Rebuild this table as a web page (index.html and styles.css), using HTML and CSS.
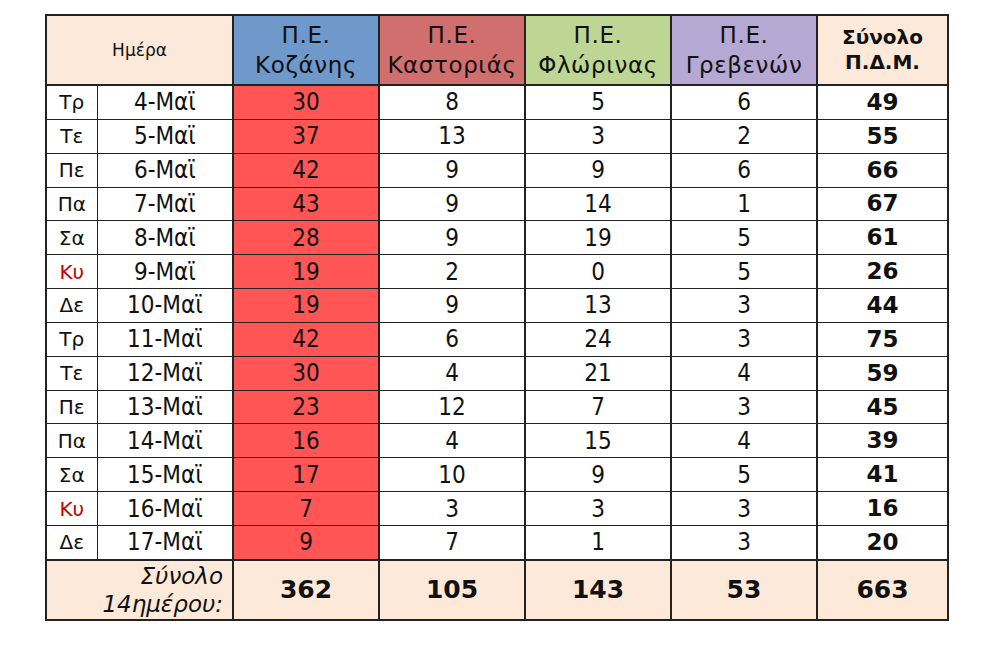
FILE: index.html
```html
<!DOCTYPE html>
<html lang="el">
<head>
<meta charset="utf-8">
<title>Κρούσματα</title>
<link rel="stylesheet" href="styles.css">
</head>
<body>
<table class="tbl">
  <colgroup>
    <col class="c-wd"><col class="c-date"><col class="c-pe"><col class="c-pe"><col class="c-pe"><col class="c-pe"><col class="c-tot">
  </colgroup>
  <thead>
    <tr class="head">
      <th colspan="2" class="h-day">Ημέρα</th>
      <th class="h-pe h-koz">Π.Ε.<br>Κοζάνης</th>
      <th class="h-pe h-kas">Π.Ε.<br>Καστοριάς</th>
      <th class="h-pe h-flo">Π.Ε.<br>Φλώρινας</th>
      <th class="h-pe h-gre">Π.Ε.<br>Γρεβενών</th>
      <th class="h-tot">Σύνολο<br>Π.Δ.Μ.</th>
    </tr>
  </thead>
  <tbody>
    <tr><td class="wd">Τρ</td><td class="dt">4-Μαϊ</td><td class="koz">30</td><td>8</td><td>5</td><td>6</td><td class="tot">49</td></tr>
    <tr><td class="wd">Τε</td><td class="dt">5-Μαϊ</td><td class="koz">37</td><td>13</td><td>3</td><td>2</td><td class="tot">55</td></tr>
    <tr><td class="wd">Πε</td><td class="dt">6-Μαϊ</td><td class="koz">42</td><td>9</td><td>9</td><td>6</td><td class="tot">66</td></tr>
    <tr><td class="wd">Πα</td><td class="dt">7-Μαϊ</td><td class="koz">43</td><td>9</td><td>14</td><td>1</td><td class="tot">67</td></tr>
    <tr><td class="wd">Σα</td><td class="dt">8-Μαϊ</td><td class="koz">28</td><td>9</td><td>19</td><td>5</td><td class="tot">61</td></tr>
    <tr><td class="wd sun">Κυ</td><td class="dt">9-Μαϊ</td><td class="koz">19</td><td>2</td><td>0</td><td>5</td><td class="tot">26</td></tr>
    <tr><td class="wd">Δε</td><td class="dt">10-Μαϊ</td><td class="koz">19</td><td>9</td><td>13</td><td>3</td><td class="tot">44</td></tr>
    <tr><td class="wd">Τρ</td><td class="dt">11-Μαϊ</td><td class="koz">42</td><td>6</td><td>24</td><td>3</td><td class="tot">75</td></tr>
    <tr><td class="wd">Τε</td><td class="dt">12-Μαϊ</td><td class="koz">30</td><td>4</td><td>21</td><td>4</td><td class="tot">59</td></tr>
    <tr><td class="wd">Πε</td><td class="dt">13-Μαϊ</td><td class="koz">23</td><td>12</td><td>7</td><td>3</td><td class="tot">45</td></tr>
    <tr><td class="wd">Πα</td><td class="dt">14-Μαϊ</td><td class="koz">16</td><td>4</td><td>15</td><td>4</td><td class="tot">39</td></tr>
    <tr><td class="wd">Σα</td><td class="dt">15-Μαϊ</td><td class="koz">17</td><td>10</td><td>9</td><td>5</td><td class="tot">41</td></tr>
    <tr><td class="wd sun">Κυ</td><td class="dt">16-Μαϊ</td><td class="koz">7</td><td>3</td><td>3</td><td>3</td><td class="tot">16</td></tr>
    <tr><td class="wd">Δε</td><td class="dt">17-Μαϊ</td><td class="koz">9</td><td>7</td><td>1</td><td>3</td><td class="tot">20</td></tr>
  </tbody>
  <tfoot>
    <tr class="foot">
      <td colspan="2" class="f-label">Σύνολο<br>14ημέρου:</td>
      <td>362</td><td>105</td><td>143</td><td>53</td><td>663</td>
    </tr>
  </tfoot>
</table>
</body>
</html>
```

FILE: styles.css
```css
html, body {
  margin: 0;
  padding: 0;
  background: #ffffff;
}

body {
  padding: 14px 0 0 45px;
  font-family: "DejaVu Sans Condensed", "DejaVu Sans", sans-serif;
  color: #111;
}

.tbl {
  border-collapse: collapse;
  table-layout: fixed;
  width: 902px;
  border: 2px solid #222;
}

.c-wd { width: 51px; }
.c-date { width: 136px; }
.c-pe { width: 146px; }
.c-tot { width: 131px; }

.tbl th,
.tbl td {
  border: 2px solid #222;
  padding: 0;
  text-align: center;
  vertical-align: middle;
}

/* body rows */
.tbl tbody td {
  border-top: 1px solid #222;
  border-bottom: 1px solid #222;
  height: 32.85px;
  font-size: 24px;
  line-height: 1;
}

.tbl tbody td.wd {
  font-family: "DejaVu Sans", sans-serif;
  font-size: 20px;
  border-right: 1px solid #222;
}

.tbl tbody td.dt {
  border-left: 1px solid #222;
}

.sun { color: #c00000; }

.koz { background: #ff5555; }

.tbl tbody td.tot {
  font-family: "DejaVu Sans", sans-serif;
  font-weight: bold;
  font-size: 23px;
}

/* header */
.head th {
  height: 68px;
  font-weight: normal;
  font-family: "DejaVu Sans", sans-serif;
}

.h-day {
  background: #fde9d9;
  font-size: 17px;
  padding-bottom: 4px;
}

.h-pe {
  font-size: 23px;
  line-height: 30px;
  letter-spacing: 0.6px;
}

.h-koz { background: #6f98cb; }
.h-kas { background: #d16e6e; }
.h-flo { background: #bdd693; }
.h-gre { background: #b5a8d2; }

.head th.h-tot {
  background: #fde9d9;
  font-weight: bold;
  font-size: 20px;
  line-height: 25px;
}

/* footer */
.foot td {
  background: #fde9d9;
  height: 58px;
  font-family: "DejaVu Sans", sans-serif;
  font-weight: bold;
  font-size: 25px;
  border-top: 2px solid #222;
}

.foot td.f-label {
  font-weight: normal;
  font-style: italic;
  font-size: 23px;
  line-height: 28px;
  text-align: right;
  padding-right: 9px;
}
```
